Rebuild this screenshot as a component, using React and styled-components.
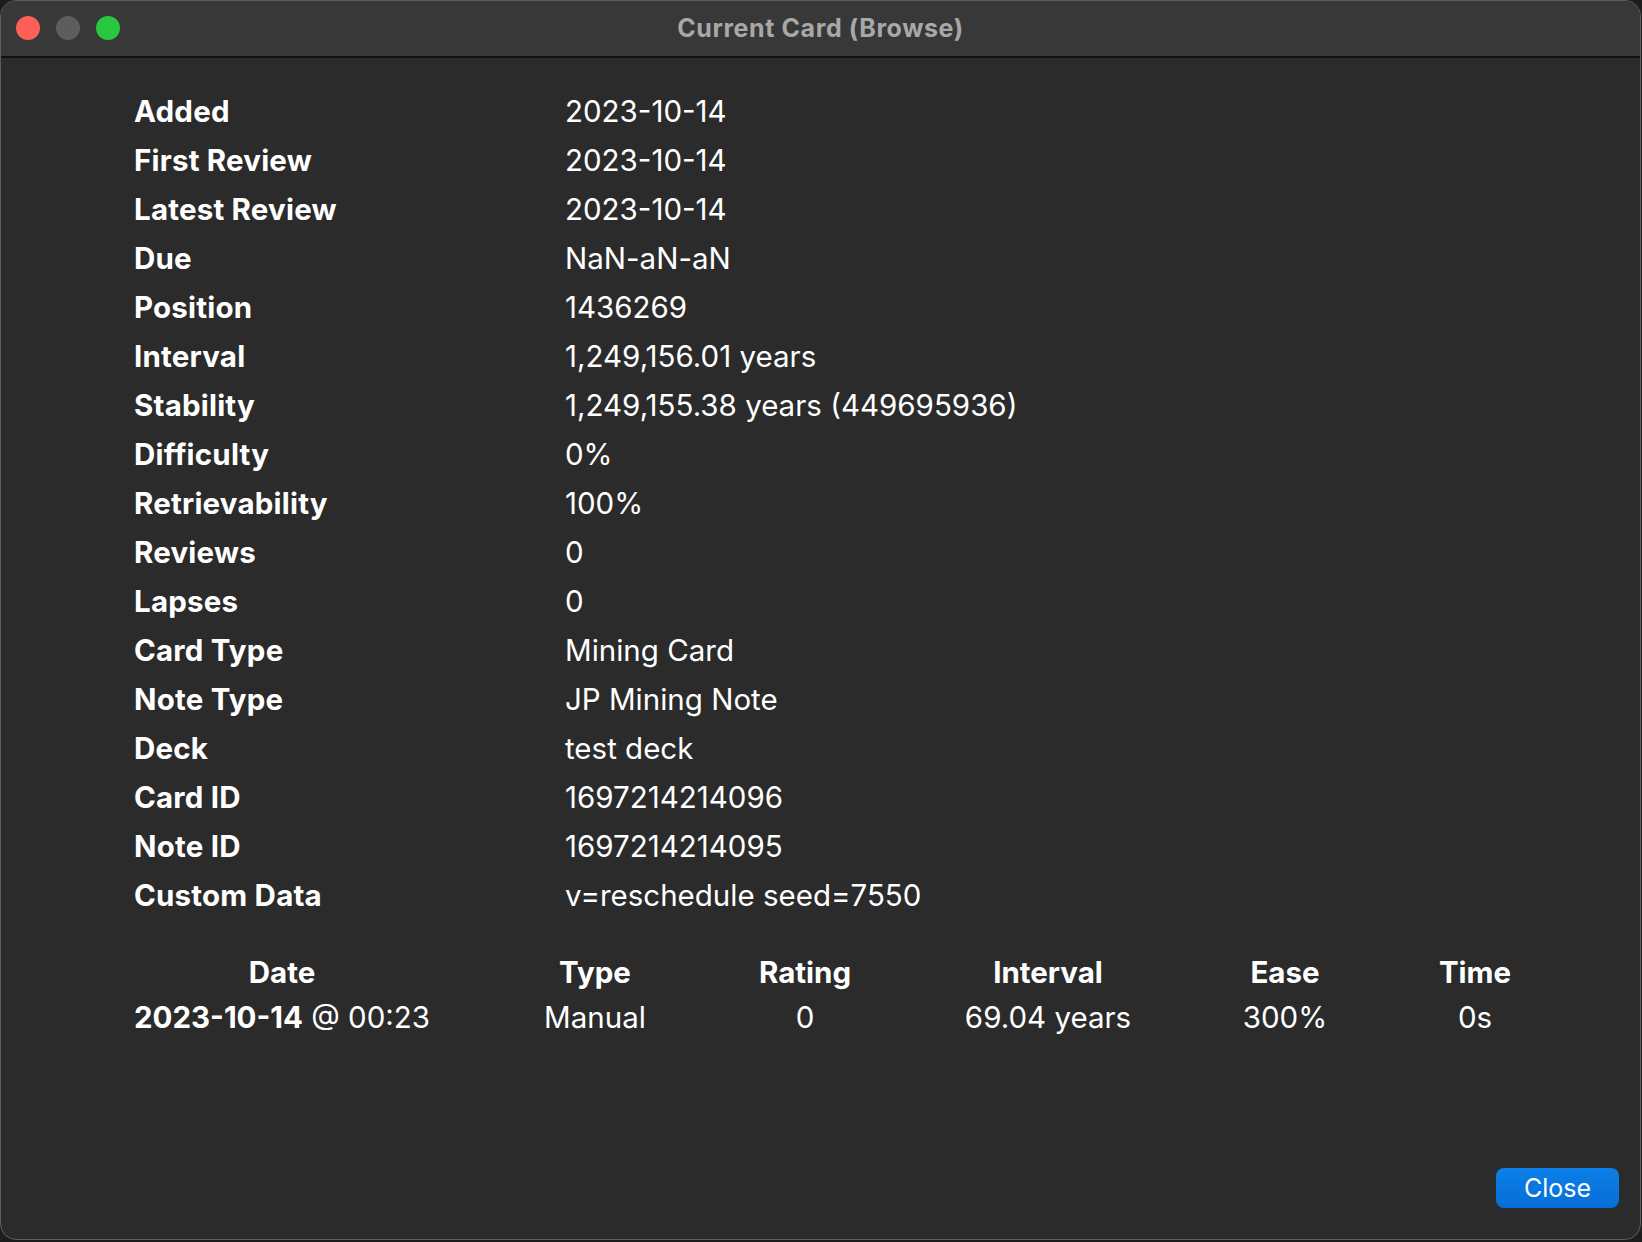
import styled, { createGlobalStyle } from 'styled-components';

const GlobalStyle = createGlobalStyle`
    html, body {
        margin: 0;
        padding: 0;
        background: #1d1d1d;
    }
    * {
        box-sizing: border-box;
    }
`;

const info = [
    ['Added', '2023-10-14'],
    ['First Review', '2023-10-14'],
    ['Latest Review', '2023-10-14'],
    ['Due', 'NaN-aN-aN'],
    ['Position', '1436269'],
    ['Interval', '1,249,156.01 years'],
    ['Stability', '1,249,155.38 years (449695936)'],
    ['Difficulty', '0%'],
    ['Retrievability', '100%'],
    ['Reviews', '0'],
    ['Lapses', '0'],
    ['Card Type', 'Mining Card'],
    ['Note Type', 'JP Mining Note'],
    ['Deck', 'test deck'],
    ['Card ID', '1697214214096'],
    ['Note ID', '1697214214095'],
    ['Custom Data', 'v=reschedule seed=7550'],
];

const headers = ['Date', 'Type', 'Rating', 'Interval', 'Ease', 'Time'];

const App = () => {
    return (
        <>
            <GlobalStyle />
            <Window>
                <TitleBar>
                    <Lights>
                        <Light color="#fe5f57" />
                        <Light color="#5d5d5d" />
                        <Light color="#28c840" />
                    </Lights>
                    <Title>Current Card (Browse)</Title>
                </TitleBar>
                <Body>
                    {/* card info */}
                    <InfoList>
                        {info.map(([label, value]) => (
                            <InfoRow key={label}>
                                <Label>{label}</Label>
                                <Value>{value}</Value>
                            </InfoRow>
                        ))}
                    </InfoList>
                    {/* review log */}
                    <RevTable>
                        {headers.map((h) => (
                            <HeadCell key={h}>{h}</HeadCell>
                        ))}
                        <Cell>
                            <b>2023-10-14</b> @ 00:23
                        </Cell>
                        <Cell>Manual</Cell>
                        <Cell>0</Cell>
                        <Cell>69.04 years</Cell>
                        <Cell>300%</Cell>
                        <Cell>0s</Cell>
                    </RevTable>
                    <Footer>
                        <CloseButton>Close</CloseButton>
                    </Footer>
                </Body>
            </Window>
        </>
    );
};

export default App;

const Window = styled.div`
    width: 1641px;
    height: 1240px;
    display: flex;
    flex-direction: column;
    background-color: #2b2b2b;
    border: 1px solid #5e5e5e;
    border-radius: 16px;
    overflow: hidden;
    font-family: Inter, 'Liberation Sans', sans-serif;
    color: #ffffff;
`;

const TitleBar = styled.div`
    position: relative;
    height: 57px;
    flex-shrink: 0;
    display: flex;
    align-items: center;
    justify-content: center;
    background-color: #383838;
    border-bottom: 2px solid #121212;
`;

const Lights = styled.div`
    position: absolute;
    left: 15px;
    top: 15px;
    display: flex;
    gap: 16px;
`;

const Light = styled.span`
    width: 24px;
    height: 24px;
    border-radius: 50%;
    background-color: ${(p) => p.color};
`;

const Title = styled.div`
    font-size: 25px;
    font-weight: 700;
    letter-spacing: 0.6px;
    color: #a8a8a8;
    margin-top: -2px;
`;

const Body = styled.div`
    flex: 1;
    display: flex;
    flex-direction: column;
    padding: 29px 0 0 0;
`;

const InfoList = styled.div`
    display: flex;
    flex-direction: column;
    padding-left: 133px;
`;

const InfoRow = styled.div`
    display: grid;
    grid-template-columns: 431px 1fr;
    height: 49px;
    line-height: 49px;
    font-size: 29.5px;
`;

const Label = styled.div`
    font-weight: 700;
    letter-spacing: 0.2px;
`;

const Value = styled.div`
    font-weight: 400;
`;

const RevTable = styled.div`
    display: grid;
    grid-template-columns: 362px 264px 156px 330px 144px 236px;
    grid-auto-rows: 45px;
    margin: 30px 0 0 100px;
    font-size: 29.5px;
    line-height: 45px;
`;

const HeadCell = styled.div`
    text-align: center;
    font-weight: 700;
    white-space: nowrap;
`;

const Cell = styled.div`
    text-align: center;
    font-weight: 400;
    white-space: nowrap;

    b {
        font-weight: 700;
    }
`;

const Footer = styled.div`
    margin-top: auto;
    display: flex;
    justify-content: flex-end;
    padding: 0 21px 31px 0;
`;

const CloseButton = styled.button`
    width: 123px;
    height: 40px;
    border: none;
    border-radius: 8px;
    background: linear-gradient(#0b80e8, #066ed6);
    color: #ffffff;
    font-family: Inter, 'Liberation Sans', sans-serif;
    font-size: 25px;
    font-weight: 400;
    padding: 0;
`;
